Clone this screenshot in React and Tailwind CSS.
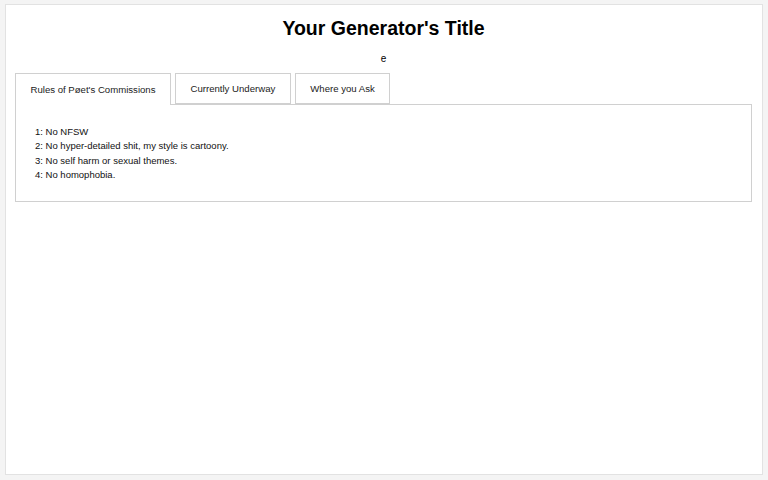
import { useState } from "react";

const tabs = ["Rules of Pøet's Commissions", "Currently Underway", "Where you Ask"];

const rules = [
  "1: No NFSW",
  "2: No hyper-detailed shit, my style is cartoony.",
  "3: No self harm or sexual themes.",
  "4: No homophobia.",
];

export default function App() {
  const [active, setActive] = useState(0);

  return (
    <div
      className="min-h-[480px] bg-[#f4f4f4] pt-[4px] pb-[5px] pl-[5px] pr-[5px]"
      style={{ fontFamily: '"Liberation Sans", Arial, sans-serif' }}
    >
      <div className="h-[471px] border border-[#e2e2e2] bg-white pl-[9px] pr-[10px] text-black">
        <h1 className="pt-[11px] text-center text-[19.5px] font-bold leading-[24px]">
          Your Generator's Title
        </h1>
        <div className="mt-[13px] text-center text-[10px] leading-[12px]">e</div>
        <div className="mt-[8px] flex gap-[4px]">
          {tabs.map((t, i) => (
            <button
              key={t}
              onClick={() => setActive(i)}
              className={
                i === active
                  ? "relative z-10 -mb-px h-[32px] border border-b-0 border-[#d0d0d0] bg-white px-[14.5px] text-[9.6px] leading-[12px] text-[#222]"
                  : "h-[31px] border border-[#d0d0d0] bg-white px-[14.5px] text-[9.6px] leading-[12px] text-[#222]"
              }
            >
              {t}
            </button>
          ))}
        </div>
        <div className="h-[98px] border border-[#d0d0d0] pl-[19px] pt-[20px] text-[9.5px] leading-[14.3px] text-[#111]">
          {active === 0 &&
            rules.map((r) => <div key={r}>{r}</div>)}
        </div>
      </div>
    </div>
  );
}
